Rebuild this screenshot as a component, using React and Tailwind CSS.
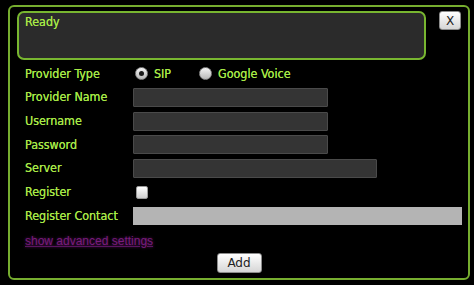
import React, { useState } from "react";

const LABEL = "text-[12.4px] text-[#a6e846] font-['DejaVu_Sans_Condensed','DejaVu_Sans',sans-serif] [text-shadow:0_0_0.4px_#a6e846]";

// Dark text input used for the provider fields
const Field = ({ width = "w-[195px]", value, onChange, type = "text" }) => (
  <input
    type={type}
    value={value}
    onChange={onChange}
    className={`${width} h-[19px] bg-[#343434] border border-[#4a4a4a] rounded-[1px] px-1 text-[12px] text-white outline-none`}
  />
);

const Radio = ({ checked, onClick, label }) => (
  <button type="button" onClick={onClick} className="flex items-center gap-[6px]">
    <span className="w-[13px] h-[13px] rounded-full border border-[#8a8a8a] bg-gradient-to-b from-[#f4f4f4] to-[#b9b9b9] flex items-center justify-center">
      {checked && <span className="w-[5px] h-[5px] rounded-full bg-[#1a1a1a]"></span>}
    </span>
    <span className={LABEL}>{label}</span>
  </button>
);

const Row = ({ label, children }) => (
  <div className="flex items-center h-[23.7px]">
    <div className={`w-[108px] ${LABEL}`}>{label}</div>
    {children}
  </div>
);

export default function App() {
  const [provider, setProvider] = useState("sip");
  const [register, setRegister] = useState(false);
  const [form, setForm] = useState({ name: "", user: "", pass: "", server: "", contact: "" });
  const set = (k) => (e) => setForm({ ...form, [k]: e.target.value });

  return (
    <div className="w-[474px] h-[285px] bg-black pt-[5px] pl-[8px]">
      <div className="w-[462px] h-[275px] border-2 border-[#76ad2f] rounded-[6px] pt-[4px] pl-[7px] flex flex-col">
        {/* Status area */}
        <div className="flex items-start">
          <div className={`w-[409px] h-[49px] bg-[#2b2b2b] border-2 border-[#78b630] rounded-[7px] px-[6px] pt-[2px] leading-[14px] ${LABEL}`}>
            Ready
          </div>
          <button
            type="button"
            className="ml-[13px] w-[22px] h-[19px] rounded-[3px] border border-[#8c8c8c] bg-gradient-to-b from-[#ffffff] to-[#d6d6d6] text-[12px] leading-none text-[#222] font-['DejaVu_Sans',sans-serif]"
          >
            X
          </button>
        </div>

        {/* Form rows */}
        <div className="pl-[8px] mt-[2px] flex flex-col">
          <Row label="Provider Type">
            <div className="flex items-center gap-[28px] pl-[2px]">
              <Radio checked={provider === "sip"} onClick={() => setProvider("sip")} label="SIP" />
              <Radio checked={provider === "gv"} onClick={() => setProvider("gv")} label="Google Voice" />
            </div>
          </Row>
          <Row label="Provider Name">
            <Field value={form.name} onChange={set("name")} />
          </Row>
          <Row label="Username">
            <Field value={form.user} onChange={set("user")} />
          </Row>
          <Row label="Password">
            <Field type="password" value={form.pass} onChange={set("pass")} />
          </Row>
          <Row label="Server">
            <Field width="w-[244px]" value={form.server} onChange={set("server")} />
          </Row>
          <Row label="Register">
            <button
              type="button"
              onClick={() => setRegister(!register)}
              className="ml-[3px] w-[12px] h-[13px] rounded-[2px] border border-[#9a9a9a] bg-gradient-to-b from-[#ffffff] to-[#cfcfcf] text-[10px] leading-none"
            >
              {register ? "✓" : ""}
            </button>
          </Row>
          <Row label="Register Contact">
            <input
              value={form.contact}
              onChange={set("contact")}
              disabled={!register}
              className="w-[329px] h-[18px] bg-[#b4b4b4] border-0 px-1 text-[12px] outline-none"
            />
          </Row>
          <a
            href="#"
            className="mt-[4px] w-fit text-[12px] text-[#7a1c7d] underline decoration-[#5a1460] font-['Liberation_Sans',sans-serif] [text-shadow:0_0_3px_rgba(160,40,170,0.6)]"
          >
            show advanced settings
          </a>
        </div>

        <div className="flex justify-center mt-[3px] pr-[7px]">
          <button
            type="button"
            className="w-[45px] h-[20px] rounded-[3px] border border-[#8c8c8c] bg-gradient-to-b from-[#ffffff] to-[#d6d6d6] text-[12px] text-[#222] font-['DejaVu_Sans',sans-serif]"
          >
            Add
          </button>
        </div>
      </div>
    </div>
  );
}
